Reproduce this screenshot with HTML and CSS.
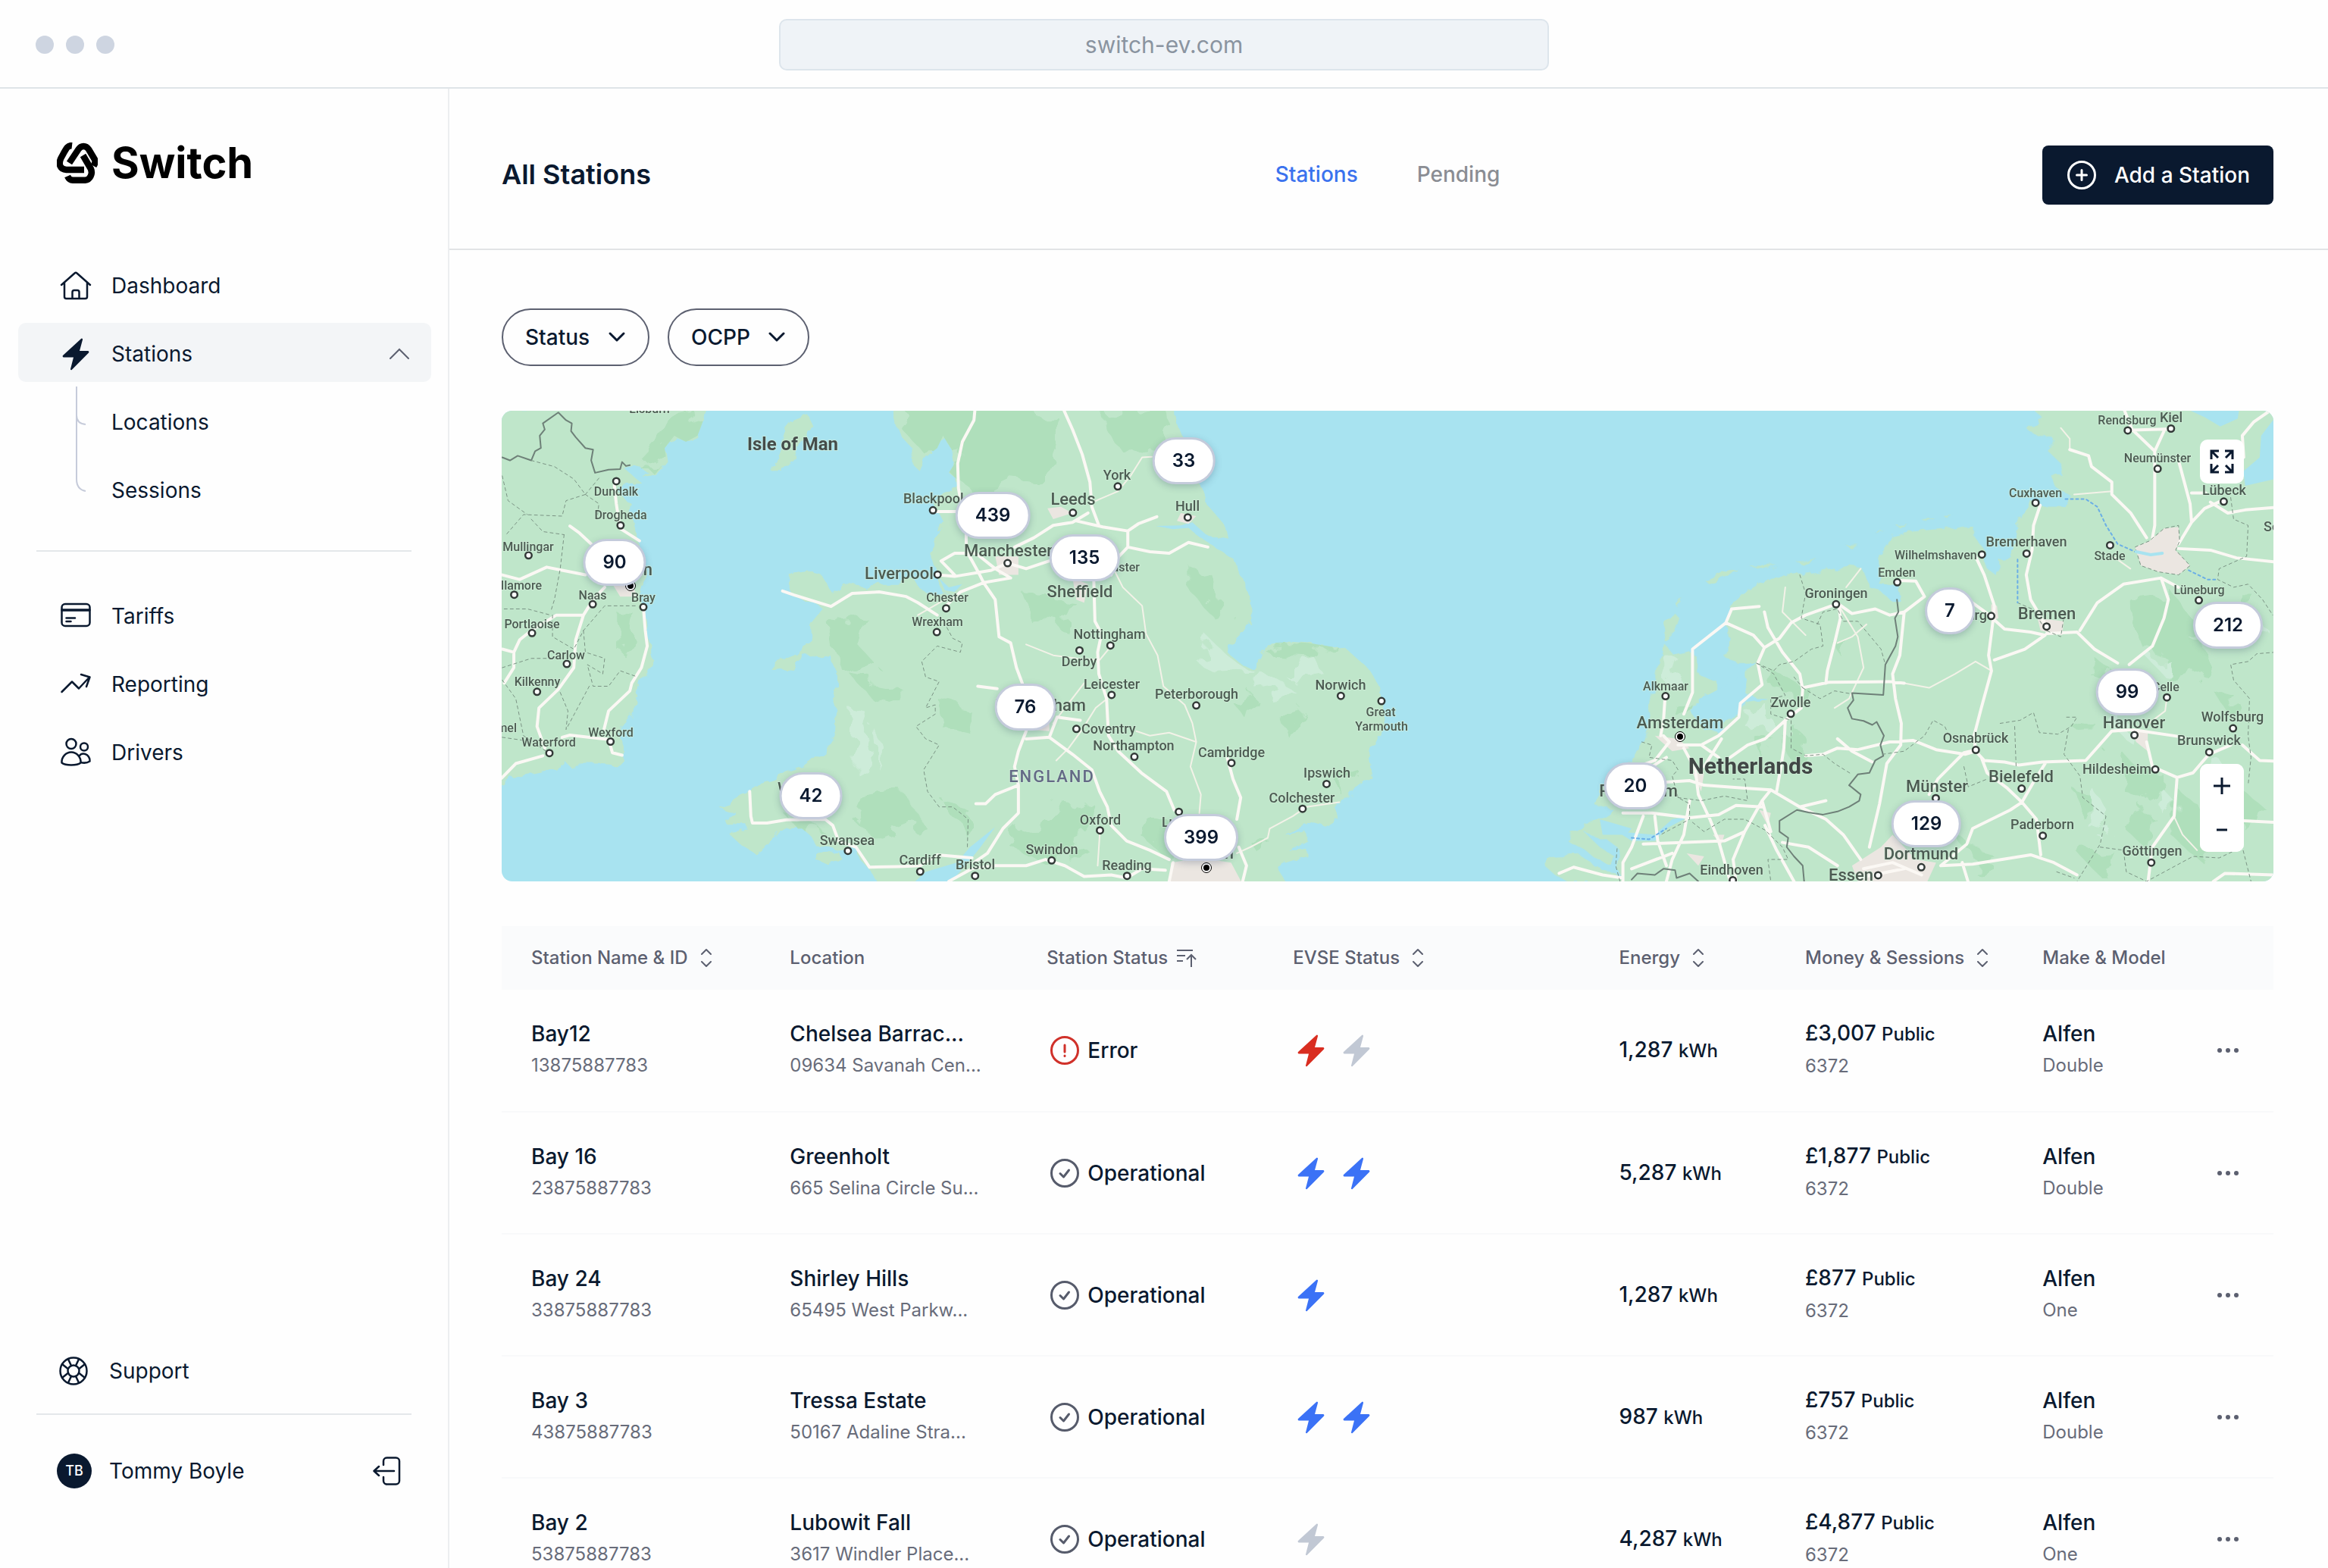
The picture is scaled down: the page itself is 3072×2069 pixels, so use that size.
FILE: index.html
```html
<!DOCTYPE html>
<html lang="en">
<head>
<meta charset="utf-8">
<title>Switch – All Stations</title>
<link rel="stylesheet" href="styles.css">
</head>
<body>
<svg class="defs" aria-hidden="true">
  <defs>
    <symbol id="bolt" viewBox="0 0 44 44"><path d="M29 2 5 24a1.500 1.500 0 0 0 1 2.500h13L15 42a1 1 0 0 0 1.700.9L39 20.500a1.500 1.500 0 0 0-1-2.500H27L31 3.200A1.200 1.200 0 0 0 29 2z"/></symbol>
    <symbol id="sort" viewBox="0 0 20 28"><path d="m4 9 6-6 6 6M4 19l6 6 6-6" fill="none" stroke="currentColor" stroke-width="2" stroke-linecap="round" stroke-linejoin="round"/></symbol>
    <symbol id="ok" viewBox="0 0 40 40"><g fill="none" stroke="currentColor" stroke-width="3" stroke-linecap="round" stroke-linejoin="round"><circle cx="20" cy="20" r="17.500"/><path d="m14 20.500 4.500 4.500 7-9"/></g></symbol>
    <symbol id="error" viewBox="0 0 40 40"><g fill="none" stroke="currentColor" stroke-width="3" stroke-linecap="round"><circle cx="20" cy="20" r="17.500"/><path d="M20 13v9M20 27v.5"/></g></symbol>
    <symbol id="dots" viewBox="0 0 30 8"><circle cx="4" cy="4" r="3"/><circle cx="15" cy="4" r="3"/><circle cx="26" cy="4" r="3"/></symbol>
    <symbol id="down" viewBox="0 0 24 16"><path d="m3 3 9 9 9-9" fill="none" stroke="currentColor" stroke-width="3" stroke-linecap="round" stroke-linejoin="round"/></symbol>
  </defs>
</svg>

<header class="browser">
  <div class="lights"><i></i><i></i><i></i></div>
  <input class="address" type="text" value="switch-ev.com" aria-label="Address" readonly>
</header>

<div class="app">
  <aside class="sidebar">
    <a class="logo" href="#">
      <svg viewBox="0 0 54 54" width="54" height="54" aria-hidden="true">
        <g fill="none" stroke="#000" stroke-width="8.500" stroke-linejoin="round">
          <path d="M20 4.200C14 3.500 12.500 8 5.500 20.500 1.500 29 4.500 35.500 12.500 36H36"/>
          <path d="M16.500 27 28.500 9c3.500-5.500 10-5.500 13.500 0L50 22.500c1.500 3 .5 5-1.500 8.500"/>
          <path d="M34.500 17 45 35c2.500 6-1 14.500-7.500 14.700H21c-4 0-5.500-2-7-5.200"/>
        </g>
      </svg>
      <span>Switch</span>
    </a>
    <nav class="nav" aria-label="Main">
      <a class="nav-row" href="#"><svg viewBox="0 0 44 44" class="line"><path d="m3 21 17.500-15.500a2.200 2.200 0 0 1 3 0L41 21M7 18v18.500a2.500 2.500 0 0 0 2.500 2.500h25a2.500 2.500 0 0 0 2.500-2.500V18M17.500 39v-8.500a2.500 2.500 0 0 1 2.500-2.500h4a2.500 2.500 0 0 1 2.500 2.500V39"/></svg>Dashboard</a>
      <a class="nav-row active" href="#"><svg viewBox="0 0 44 44" fill="#0a192f"><use href="#bolt"/></svg>Stations<svg class="chev" viewBox="0 0 28 18"><path d="m2 15 12-12 12 12"/></svg></a>
      <div class="sub">
        <svg class="tree" viewBox="0 0 16 140"><path d="M2 0v122q0 14 12 16M2 38q0 11 12 12"/></svg>
        <a class="nav-row" href="#">Locations</a>
        <a class="nav-row" href="#">Sessions</a>
      </div>
      <hr>
      <a class="nav-row" href="#"><svg viewBox="0 0 44 44" class="line"><rect x="3.500" y="6" width="37" height="29" rx="4.500"/><path d="M4 14h36" stroke-width="3.500"/><path d="M9.500 24.500h11.500M9.500 29h6"/></svg>Tariffs</a>
      <a class="nav-row" href="#"><svg viewBox="0 0 44 44" class="line"><path d="M3.500 32 17 18.500l9 9L40 12.500M29 9l11.500 3.500L36 25"/></svg>Reporting</a>
      <a class="nav-row" href="#"><svg viewBox="0 0 44 44" class="line"><circle cx="16" cy="10.500" r="6.500"/><circle cx="33" cy="14.500" r="5"/><path d="M3.500 35.500C3 28 9 21.500 16 21.500S29 28 28.500 35.500c-5 4-20 4-25 0zM26.500 26.500c2-2.500 5-3.500 8-2.500 3.500 1 6.500 5 6 9.500-3 2-8 2.500-12 1.500"/></svg>Drivers</a>
    </nav>
    <div class="foot">
      <a class="foot-row" href="#"><svg viewBox="0 0 44 44" class="line"><circle cx="22" cy="22" r="17.500"/><circle cx="22" cy="22" r="7.500"/><path d="m14.500 19-7.500-6M19 15l-4-8.500M25 15l4-8.500M29.500 19l7.500-6M14.500 25 7 31M19 29l-4 8.500M25 29l4 8.500M29.500 25l7.500 6"/></svg>Support</a>
      <hr>
      <div class="foot-row"><span class="avatar">TB</span>Tommy Boyle
        <button class="logout" type="button" aria-label="Log out"><svg viewBox="0 0 44 44" class="line"><path d="M17 14V9a4.500 4.500 0 0 1 4.500-4.500h12A4.500 4.500 0 0 1 38 9v26a4.500 4.500 0 0 1-4.500 4.500h-12A4.500 4.500 0 0 1 17 35v-5M31 22H5M11 16l-6.500 6 6.500 6"/></svg></button>
      </div>
    </div>
  </aside>

  <main class="main">
    <header class="head">
      <h1>All Stations</h1>
      <nav class="tabs" aria-label="Views"><a class="on" href="#">Stations</a><a href="#">Pending</a></nav>
      <button class="add" type="button"><svg viewBox="0 0 40 40" width="40" height="40"><g fill="none" stroke="#fff" stroke-width="3" stroke-linecap="round"><circle cx="20" cy="20" r="17.500"/><path d="M20 13.500v13M13.500 20h13"/></g></svg>Add a Station</button>
    </header>

    <div class="content">
      <div class="filters">
        <label class="pill"><select aria-label="Status"><option>Status</option></select><svg viewBox="0 0 24 16"><use href="#down"/></svg></label>
        <label class="pill"><select aria-label="OCPP"><option>OCPP</option></select><svg viewBox="0 0 24 16"><use href="#down"/></svg></label>
      </div>

      <section class="map" aria-label="Station map">
        <svg class="chart" viewBox="662 542 2338 621" preserveAspectRatio="xMidYMid slice">
          <defs>
            <filter id="coast" x="0" y="0" width="1" height="1"><feTurbulence type="fractalNoise" baseFrequency=".06" numOctaves="3" seed="4"/><feDisplacementMap in="SourceGraphic" scale="12"/></filter>
            <filter id="woods" x="0" y="0" width="1" height="1"><feTurbulence type="fractalNoise" baseFrequency=".025" numOctaves="3" seed="9"/><feDisplacementMap in="SourceGraphic" scale="60"/></filter>
            <path id="land-w" d="M0 20H550L545 60 530 110 500 130 470 110 445 150 450 190 420 235 385 240 400 225 365 205 340 215 385 262 340 265 325 290 345 320 360 330 358 370 370 420 375 470 395 520 400 570 385 600 375 630 395 680 400 740 410 790 410 850 385 900 370 960 365 1010 340 1050 325 1075 335 1110 335 1165 320 1175 270 1170 220 1170 205 1185 185 1160 165 1190 120 1195 80 1205 50 1215 25 1240 0 1260zM815 42 830 80 800 120 780 180 745 220 718 222 740 160 755 100 780 60zM1030 20 1040 60 1055 110 1085 150 1085 200 1105 225 1120 180 1150 150 1165 110 1190 160 1195 200 1180 230 1200 250 1170 300 1140 330 1160 380 1150 420 1165 410 1130 480 1130 500 1145 530 1150 570 1165 620 1200 620 1130 625 1110 610 1080 560 1060 590 1010 590 960 600 910 590 880 620 850 560 820 550 770 560 770 600 780 630 830 650 850 665 820 710 825 770 780 820 740 840 720 870 745 865 780 870 800 815 850 830 870 815 890 870 890 920 880 960 890 1000 885 1080 860 1130 810 1180 760 1200 730 1225 690 1240 665 1258 640 1270 610 1300 585 1310 630 1330 600 1350 605 1365 655 1365 665 1385 610 1395 640 1430 680 1460 710 1430 740 1385 800 1380 820 1400 840 1440 900 1445 940 1440 950 1480 980 1520 1000 1570H2063L2038 1525 2028 1500 2078 1480 2108 1470 2108 1450 2058 1450 2108 1420 2103 1390 2048 1400 2118 1360 2158 1375 2188 1350 2178 1310 2208 1290 2238 1240 2268 1210 2273 1130 2293 1080 2308 1000 2293 920 2263 860 2208 800 2108 780 2048 775 2003 785 1988 830 1968 868 1938 850 1908 820 1903 795 1948 740 1963 700 1958 630 1938 570 1918 510 1868 470 1818 430 1838 430 1908 448 1888 390 1853 340 1838 290 1823 230 1798 150 1778 90 1758 20zM835 1460 890 1450 905 1480 870 1500 835 1480z"/>
            <path id="land-e" d="M100 1500 120 1470 220 1465 260 1490 280 1510 340 1520 365 1551 180 1551 130 1525zM180 1420 190 1390 230 1385 290 1440 340 1470 330 1500 280 1480 240 1450zM360 1570 350 1440 320 1420 260 1400 225 1385 235 1360 290 1350 340 1320 270 1300 290 1270 330 1230 400 1160 440 1090 465 1000 480 920 490 850 510 780 530 800 545 820 600 810 630 830 630 880 690 900 690 940 640 950 610 980 610 1010 650 1060 700 1070 750 1010 800 970 870 960 800 950 795 900 800 860 830 840 760 840 725 830 735 780 730 700 740 660 800 610 880 570 960 560 1050 550 1150 530 1190 535 1205 560 1220 600 1270 620 1290 640 1320 640 1330 600 1255 590 1255 500 1285 460 1300 430 1340 420 1450 410 1581 405 1586 440 1616 480 1626 540 1656 560 1671 540 1666 510 1711 505 1726 450 1731 400 1751 350 1776 320 1816 340 1896 340 1921 310 1866 280 1846 240 1886 240 1881 200 1841 165 1856 120 1776 100 1766 90 1796 60 1816 50 1776 20H2630V1570zM545 680 565 700 550 740 515 770 505 765 520 710zM655 580 700 555 770 542 740 565 665 588zM805 532 900 528 850 542zM965 515 1040 508 990 525zM550 650 580 640 555 662zM1135 460 1180 460 1150 470zM1235 418 1275 416 1250 422zM1310 400 1355 398 1325 405zM1400 382 1450 380 1420 388zM1475 370 1510 368 1485 375z"/>
            <path id="towns-w" d="M320 257h0M331 400h0M390 664h0M147 1136h0M115 938h0M1139 351h0M1332 522h0M1151 559h0M1173 668h0M1149 745h0M919 1452h0M1106 1519h0M1248 1533h0M1501 359h0M1617 274h0M1798 374h0M1598 788h0M1518 804h0M1601 948h0M1820 982h0M1510 1058h0M1660 1148h0M1911 1168h0M2194 951h0M2299 968h0M2157 1236h0M2095 1316h0M1571 1386h0M1775 1326h0M1446 1483h0M1641 1533h0M93 497h0M259 655h0M56 624h0M102 748h0M192 848h0M305 1099h0"/>
            <path id="towns-e" d="M517 952h0M949 1009h0M1105 655h0M1316 584h0M1608 494h0M1793 327h0M1762 491h0M2050 464h0M2111 93h0M2260 87h0M2214 217h0M2442 323h0M1640 693h0M1831 727h0M2356 642h0M2246 956h0M2134 1078h0M2474 1056h0M2392 1133h0M1587 1126h0M2206 1189h0M1745 1251h0M1818 1403h0M2192 1490h0M1399 1505h0M1250 1531h0M749 1547h0M1449 1282h0"/>
          </defs>
          <rect class="sea" x="662" y="542" width="2338" height="621"/>
          <g filter="url(#coast)">
            <use href="#land-w" class="land" transform="translate(650 530) scale(.5102 .40816)"/>
            <use href="#land-e" class="land" transform="translate(2000 530) scale(.38265 .40816)"/>
          </g>
          <clipPath id="clip-w"><use href="#land-w" transform="translate(650 530) scale(.5102 .40816)"/></clipPath>
          <clipPath id="clip-e"><use href="#land-e" transform="translate(2000 530) scale(.38265 .40816)"/></clipPath>
          <g clip-path="url(#clip-w)"><g class="woods" filter="url(#woods)">
            <g transform="translate(650 530) scale(.5102 .40816)">
              <path d="M1100 20H1440L1460 120 1420 260 1340 250 1260 300 1200 260 1210 160 1110 160 1060 90zM1560 20H1740L1780 110 1700 170 1620 150 1580 80zM450 60 540 40 520 120 440 230 390 230 450 150zM320 680 370 690 360 780 320 800zM880 680 960 690 940 780 1000 860 930 900 900 850zM940 900 1060 930 1080 1000 980 960zM1150 960 1220 980 1240 1080 1170 1060zM1370 620 1500 640 1480 740 1400 720zM1800 530 1860 560 1900 660 1850 680 1800 600zM950 1280 1060 1260 1100 1350 1000 1400 930 1350zM1470 1300 1540 1280 1560 1420 1440 1500 1340 1440zM2010 780 2200 800 2160 820 2000 810zM1920 980 1980 960 1960 1040zM2040 1020 2100 1000 2060 1090zM1700 1340 1760 1360 1740 1460 1690 1420zM1180 1310 1240 1330 1220 1400zM760 1340 850 1380 800 1400zM2190 1200 2240 1180 2200 1280zM1940 1400 2010 1420 1990 1470z"/>
              <path class="pale" d="M930 1000 970 1010 980 1080 940 1200 920 1140zM1850 760 1930 850 1980 880 1880 890 1830 850zM2060 840 2120 820 2150 880 2060 900zM990 1060 1020 1130 1000 1190zM1990 880 2080 940 2000 960z"/>
            </g>
          </g></g>
          <g clip-path="url(#clip-e)"><g class="woods" filter="url(#woods)">
            <g transform="translate(2000 530) scale(.38265 .40816)">
              <path d="M2100 620 2250 600 2330 700 2280 820 2170 800zM2210 740 2370 760 2400 860 2250 900zM1990 820 2060 870 2000 900zM2080 1120 2160 1200 2250 1220 2200 1320 2120 1280zM1920 1060 1990 1030 1990 1090zM2280 1250 2350 1300 2440 1420 2380 1500 2280 1420zM2100 1380 2200 1340 2180 1450zM1900 1230 1990 1280 1960 1350zM2500 1250 2590 1320 2570 1380 2480 1350zM900 1060 980 1060 960 1180zM840 1100 880 1080 870 1180zM880 870 990 900 980 950 900 940zM1930 1450 2050 1440 2010 1530zM2400 930 2480 950 2450 1000zM1290 1340 1350 1330 1330 1400zM1100 780 1150 780 1130 830zM550 980 600 960 580 1040zM2480 600 2560 640 2500 660zM1560 1440 1640 1460 1600 1540z"/>
              <path class="pale" d="M770 980 860 970 860 1040 790 1050zM500 810 560 830 540 890 500 900zM2180 830 2250 830 2240 890zM2050 1050 2110 1030 2100 1080zM1990 1250 2060 1340 1980 1380zM2230 1250 2280 1300 2240 1340zM2520 700 2600 740 2560 800zM2400 1150 2480 1180 2430 1250z"/>
            </g>
          </g></g>
          <g transform="translate(650 530) scale(.5102 .40816)">
            <path class="sea" d="M1085 1560 1120 1520 1200 1490 1235 1440 1300 1375 1262 1440 1230 1490 1180 1560zM1715 402 1780 400 1810 390 1850 435 1830 440 1800 408 1760 412zM1155 570 1180 600 1215 590 1195 615 1170 610z"/>
            <path class="urban" d="M1755 1490 1830 1475 1910 1490 1940 1560H1750zM1300 500 1360 500 1360 560 1310 560zM1435 345 1470 340 1500 360 1450 380zM310 590 360 590 375 630 330 630zM1380 1030 1440 1040 1440 1065 1390 1060zM1780 360 1820 370 1800 395 1770 385zM1500 570 1540 590 1530 650 1510 640z"/>
            <path class="road thin" d="M1545 330 1570 315 1617 290 1650 240 1680 180 1705 178M1610 550 1630 600 1680 660 1690 750 1720 820 1735 920 1790 980 1810 1040 1820 1100 1805 1180 1832 1270 1828 1330M1458 1160 1490 1120 1525 1060 1560 990 1590 960M1380 785 1450 820 1510 830 1570 835 1600 790M1665 1065 1700 1080 1750 1070 1820 1100M1925 1460 1960 1440 2005 1410 2010 1380 2070 1340 2105 1310 2190 1295M1571 1386 1565 1500M1100 690 1170 640M1530 910 1450 1040"/>
            <path class="road" d="M315 270 320 330 330 410 380 450M200 402 225 425 255 460M25 560 70 575 140 535 180 545 240 560M290 600 260 640 235 690 165 690 100 740 70 770 55 810 25 800M55 810V860L30 910M235 690 215 770 210 860 170 930 120 990 115 1050 135 1120M390 664 395 740 400 790 385 860 360 910 355 935 300 1000 288 1060M180 1085 200 1078 300 1092 310 1135 335 1143M0 1240 25 1215 60 1170 130 1145M750 612 780 625 875 662 930 620 1000 615 1070 630 1100 650 1150 690M1248 20 1245 60 1215 130 1203 200 1205 280 1225 420V480L1260 560 1270 585 1300 640 1310 760 1340 780 1355 860 1370 910M1475 20 1500 90 1525 170 1545 260 1550 340 1568 400M1139 355H1200M1150 560 1195 565 1290 545 1332 522M1195 490 1160 515 1195 560M1195 490H1250L1300 540 1340 570 1270 585 1210 615 1173 660M1332 522 1380 540 1440 515M1350 470 1400 440 1450 400 1500 390 1540 360M1508 385 1578 405 1643 418V470L1700 485 1750 490 1800 455 1850 470M1643 418 1670 395 1718 372M1643 470 1620 500 1600 560M1555 580 1558 710 1575 750 1565 810 1568 880 1588 960 1593 1080 1618 1130 1678 1200 1743 1260 1763 1320M1900 1150 1915 1220 1935 1280 1925 1350M1380 1065 1360 1130 1350 1180 1360 1240V1330L1320 1380 1280 1460 1245 1490M1360 1240 1300 1270 1275 1300H1250M1380 1090 1440 1085 1500 1140 1550 1190 1570 1260 1590 1310 1600 1370 1640 1420 1700 1450 1750 1480M1440 1085 1460 1020 1520 1030M1255 920 1305 928M665 1260 668 1340 672 1362H710L760 1352 860 1350 880 1370 895 1420 940 1440 975 1505 1050 1503 1106 1500 1150 1465 1240 1475M1180 1551 1240 1510 1300 1500 1380 1500 1430 1480 1480 1500 1530 1535 1600 1530 1640 1540 1680 1510 1740 1515M1760 1490 1750 1551M1930 1440 1950 1500 1940 1551"/>
            <path class="border" d="M25 180 45 190 65 175 100 190 110 160 125 150 122 110 135 90 130 70 170 35 190 60 205 70 203 95 215 115 240 150 260 155 255 190 265 230 300 220 330 218 335 195 345 208 355 205"/>
            <path class="dash" d="M100 190 160 210 210 250 240 300 190 320 180 370 80 365 35 430M240 300 275 330 270 380M240 300 280 240M185 430 175 540 160 640 150 680M100 380 130 420 185 430M25 240 40 320 90 365M30 670 90 670 150 690M155 690V760L210 800 235 740 290 660 370 660M235 740 240 810 290 830 285 880 245 850 260 920 300 920 330 870 375 890M25 860 100 830 180 830M175 940 195 1000 190 1060 250 920M25 900 60 960 80 1080 150 1140M25 1085 80 1095M1175 730 1190 765 1215 780 1210 810 1180 800 1150 790 1110 840 1120 890 1155 905 1120 990 1145 980 1145 1010 1095 1050 1120 1090 1155 1110 1115 1190 1125 1260 1155 1310 1190 1310 1230 1350 1228 1440"/>
          </g>
          <g transform="translate(2000 530) scale(.38265 .40816)">
            <path class="sea" d="M2306 20 2496 20 2490 55 2430 80 2376 50zM2620 50 2571 110 2566 180 2510 225 2516 272 2620 250zM350 1390 480 1400 540 1350 600 1340 520 1380 480 1420 400 1420zM290 1350 400 1380 380 1400 300 1400zM740 850 780 860 760 900 700 930 640 960 620 1030 680 1060 740 1000 790 960 790 870z"/>
            <path class="urban" d="M2136 470 2186 450 2236 410 2286 405 2290 450 2276 480 2326 530 2286 560 2216 550 2156 530zM1160 1500 1260 1440 1300 1400 1380 1480 1450 1490 1420 1551H1180zM1800 700 1890 710 1885 755 1810 740zM480 1080 560 1090 600 1120 540 1130zM2120 1060 2180 1070 2180 1130 2140 1100zM610 1200 650 1200 640 1260zM1640 655 1660 660 1665 700 1640 710zM840 1320 880 1330 870 1370zM590 1460 650 1470 630 1500zM680 1400 720 1400 710 1430z"/>
            <path class="road thin" d="M1641 870 1586 840 1516 880 1426 925 1340 910M1190 540 1140 600M930 600 920 680 1000 755M1115 660 1180 760 1200 860 1150 960 1100 990M2120 540 2060 500M2246 956 2240 1000 2170 1050M1880 85 1911 120 1911 155M1926 300 2056 290M1110 780 1160 760 1210 720M2270 1340 2300 1400 2350 1450"/>
            <path class="road" d="M515 960 510 1030 500 1080M745 670 840 662M725 715 610 800V940L580 1010M745 670 725 715 820 755 858 795 910 765 950 715 1000 690 1090 660 1115 655 1160 685 1240 670 1290 690 1340 680 1410 630 1380 580 1320 578M858 680 870 730 920 810 980 880 990 930 985 990 930 1030M858 795 835 845 850 915 775 975 770 1020 700 1080 640 1110M1115 660 1120 700 1100 780 1075 870 1070 910M990 925 1080 907 1290 905 1340 910M1340 680 1325 820 1300 880 1310 960 1330 1040 1328 1110 1280 1170 1255 1300 1220 1440M560 1110 640 1110 700 1150M930 1030 925 1120 915 1180 900 1260M930 1030 860 1090 800 1110 740 1150M1000 1145 1060 1140 1110 1120 1180 1125 1290 1100 1370 1095 1450 1125 1550 1140M1110 1090 1160 1130 1230 1165M520 1230 600 1225 650 1240 800 1250 880 1255 980 1310 1070 1350 1130 1400 1190 1480M980 1310 1070 1290M650 1180 710 1090M580 1120 620 1190 630 1270 670 1350 700 1420M600 1290 580 1400 540 1480 520 1551M370 1330 470 1330 600 1345 700 1335 760 1305 850 1310M880 1255 850 1290 790 1390 720 1420 440 1430M440 1340 400 1440 370 1490V1551M700 1420 740 1551M400 1510 540 1460M480 1340 490 1420 520 1500M150 1525 200 1505 300 1530 370 1540M860 1370 900 1450 960 1551M920 1425 1010 1440 1110 1500M790 1390 750 1480 760 1551M480 1160 530 1100 510 1080M420 1180 480 1160M850 1290 880 1390M520 1150 470 1180M1586 500 1616 560 1651 660 1646 710 1631 820 1641 870 1606 990 1581 1080 1586 1126M1560 640 1620 680 1686 735 1776 745 1826 755 1756 800 1651 835M1809 335 1786 400 1781 480 1761 560 1776 640 1831 727M1831 750 1936 745 1996 800 2076 845M1946 740 2006 650 2096 590 2226 570 2251 640 2236 700 2196 790 2116 850M1911 155 1976 175 1986 210 2056 260V300L2121 360 2176 440M2096 20 2126 90 2204 160 2236 95M2204 160V400L2196 440M2126 92 2261 88M2286 190 2306 260 2326 330 2331 390 2286 460M2331 390 2376 345 2436 320M2396 325 2456 360 2516 350 2620 342M2331 295H2380M2286 475 2396 480 2486 505 2620 518M2226 570 2286 600M2600 30 2546 65 2506 110 2511 180M1586 1126 1546 1135 1456 1220 1426 1270M1550 1140 1586 1130 1616 1160 1686 1165 1736 1175 1816 1165 1966 1160 2056 1065 2126 1060 2306 1085M1606 1150 1626 1200 1696 1250 1746 1295 1796 1350 1811 1465M1746 1295 1706 1320 1576 1380 1556 1430 1466 1500M1746 1295 1786 1230 1826 1170M1466 1500 1576 1495 1776 1465 1856 1490 1936 1530M2176 1100 2196 1180 2281 1215 2336 1200 2391 1140 2466 1110M2281 1215 2271 1340 2196 1440 2181 1551M2506 1110 2566 1160 2620 1162M2510 1355 2620 1360M2406 1551 2446 1525 2620 1530M1540 1490 1560 1551M1200 1510 1300 1490 1400 1530M1180 1540 1340 1510"/>
            <path class="border" d="M1315 640 1320 680 1308 700 1318 760 1310 790 1275 850 1268 948 1160 942 1165 965 1145 990 1160 1025 1200 1032 1230 1045 1245 1035 1270 1080 1258 1110 1268 1145 1240 1160 1220 1200 1180 1205 1150 1240 1190 1270 1185 1290 1150 1310 1110 1325 1060 1335 1010 1328 970 1320 910 1355 910 1390 940 1410 935 1440 960 1470 990 1500 995 1551M400 1545 420 1525 480 1530 510 1510 550 1515 555 1540 600 1525 630 1551"/>
            <path class="dash" d="M980 560 1000 620 985 700 1050 720 1060 790 1020 800 960 840 910 850 890 870 830 845M1040 720 1060 680 1110 670 1130 710 1180 710 1260 800 1275 850M830 845 890 880 930 950 880 960 880 1010 950 1030 950 1120 1000 1145 1060 1140 1100 1170 1160 1205M990 925 1050 960 1100 935 1160 945M960 890 990 925M1265 1140 1340 1130 1410 1080 1440 1030 1480 1050 1500 1090M435 1100 470 1110 460 1150 540 1160 560 1190 540 1210 560 1280 600 1300V1350L500 1400M560 1280 640 1290 720 1275 800 1290 790 1220 750 1220M610 1360 650 1390 720 1350 790 1350 860 1385 920 1440 940 1480 870 1480 880 1551M350 1445 345 1500 360 1551M1671 1040 1740 1030 1786 1005 1806 1070 1870 1075 1916 1050 1936 1020 1900 1020M1721 1050 1726 1180M1546 1180 1561 1245 1626 1220M1906 1060 1891 1140 1946 1210 1956 1280 2036 1340 2016 1430 1936 1551M1866 1520 1926 1540M2016 1440 2096 1450 2106 1520 2176 1551 2336 1470 2426 1475 2506 1440 2536 1551M2620 810 2556 815 2526 840 2466 850 2476 900 2531 960 2526 1080 2536 1150 2526 1240M2466 310 2476 380 2526 400 2521 500 2426 540 2421 575 2476 600 2526 590 2576 640 2611 690M2136 470 2186 450 2236 410 2286 400 2290 450 2276 480 2326 530 2286 560 2216 550 2156 530zM1731 650 1780 670 1830 740 1880 760 1890 700"/>
            <path class="river" d="M1896 315 1966 315 2006 340 2036 400 2076 460 2136 485M2321 545 2386 575 2421 575M1731 510V650M400 1410 460 1415 520 1380"/>
            <path class="water" d="M2140 485 2190 495 2230 490"/>
          </g>
          <g transform="translate(650 530) scale(.5102 .40816)"><use href="#towns-w" class="ring"/><use href="#towns-w" class="hole"/></g>
          <g transform="translate(2000 530) scale(.38265 .40816)"><use href="#towns-e" class="ring"/><use href="#towns-e" class="hole"/></g>
          <g class="capitals"><circle cx="2217" cy="972" r="5"/><circle cx="1592" cy="1145" r="5"/><circle cx="832" cy="773" r="5"/></g>

          <g class="t16">
            <text x="857" y="545">Lisburn</text><text x="813" y="654">Dundalk</text><text x="819" y="685">Drogheda</text><text x="697" y="727">Mullingar</text><text class="end" x="715" y="778">Tullamore</text><text x="782" y="791">Naas</text><text x="849" y="794">Bray</text><text x="702" y="829">Portlaoise</text><text x="747" y="870">Carlow</text><text x="709" y="905">Kilkenny</text><text class="end" x="682" y="966">Clonmel</text><text x="724" y="985">Waterford</text><text x="806" y="972">Wexford</text><text x="1250" y="794">Chester</text><text x="1237" y="826">Wrexham</text><text class="end" x="1504" y="754">Doncaster</text><text x="1822" y="945">Great</text><text x="1823" y="964">Yarmouth</text>
            <text class="start" x="2500" y="738">Wilhelmshaven</text><text x="2503" y="761">Emden</text><text x="2198" y="911">Alkmaar</text><text x="2807" y="560">Rendsburg</text><text x="2847" y="610">Neumünster</text><text x="2686" y="656">Cuxhaven</text><text x="2784" y="739">Stade</text><text x="2902" y="784">Lüneburg</text><text class="start" x="2840" y="912">Celle</text>
          </g>
          <g class="t18">
            <text class="start" x="1192" y="664">Blackpool</text><text x="1474" y="633">York</text><text x="1567" y="674">Hull</text><text x="1464" y="843">Nottingham</text><text x="1424" y="879">Derby</text><text x="1467" y="909">Leicester</text><text x="1579" y="922">Peterborough</text><text class="start" x="1427" y="968">Coventry</text><text x="1496" y="990">Northampton</text><text x="1625" y="999">Cambridge</text><text x="1769" y="910">Norwich</text><text x="1751" y="1026">Ipswich</text><text x="1718" y="1059">Colchester</text><text x="1452" y="1088">Oxford</text><text class="start" x="1533" y="1091">Luton</text><text x="1118" y="1115">Swansea</text><text x="1214" y="1141">Cardiff</text><text x="1287" y="1147">Bristol</text><text x="1388" y="1127">Swindon</text><text x="1487" y="1148">Reading</text>
            <text x="2423" y="789">Groningen</text><text x="2363" y="933">Zwolle</text><text x="2285" y="1154">Eindhoven</text><text x="2865" y="557">Kiel</text><text x="2935" y="653">Lübeck</text><text x="2674" y="721">Bremerhaven</text><text class="end" x="2622" y="818">enburg</text><text class="start" x="2987" y="701">Schwerin</text><text x="2946" y="952">Wolfsburg</text><text x="2915" y="983">Brunswick</text><text x="2607" y="980">Osnabrück</text><text class="start" x="2748" y="1021">Hildesheim</text><text x="2695" y="1094">Paderborn</text><text x="2840" y="1129">Göttingen</text>
          </g>
          <g class="t22">
            <text class="end" x="861" y="759">Dublin</text><text x="1416" y="666">Leeds</text><text class="start" x="1272" y="734">Manchester</text><text class="start" x="1141" y="764">Liverpool</text><text x="1425" y="788">Sheffield</text><text class="end" x="1433" y="938">Birmingham</text><text class="end" x="1628" y="1133">London</text><text class="start" x="1026" y="1048">Wales</text>
            <text x="2217" y="961">Amsterdam</text><text class="end" x="2214" y="1051">Rotterdam</text><text x="2556" y="1045">Münster</text><text x="2535" y="1134">Dortmund</text><text class="start" x="2413" y="1162">Essen</text><text x="2701" y="817">Bremen</text><text x="2816" y="961">Hanover</text><text x="2667" y="1032">Bielefeld</text>
          </g>
          <text class="region" x="1388" y="1032">ENGLAND</text>
          <text class="island" x="1046" y="594">Isle of Man</text>
          <text class="country" x="2310" y="1021">Netherlands</text>
        </svg>

        <button class="pin" type="button" style="--x:900;--y:66">33</button>
        <button class="pin" type="button" style="--x:648;--y:138">439</button>
        <button class="pin" type="button" style="--x:769;--y:194">135</button>
        <button class="pin" type="button" style="--x:149;--y:200">90</button>
        <button class="pin" type="button" style="--x:691;--y:391">76</button>
        <button class="pin" type="button" style="--x:408;--y:508">42</button>
        <button class="pin" type="button" style="--x:923;--y:563">399</button>
        <button class="pin" type="button" style="--x:1496;--y:495">20</button>
        <button class="pin" type="button" style="--x:1880;--y:545">129</button>
        <button class="pin" type="button" style="--x:1911;--y:264">7</button>
        <button class="pin" type="button" style="--x:2278;--y:283">212</button>
        <button class="pin" type="button" style="--x:2145;--y:371">99</button>

        <div class="controls">
          <button class="ctl" type="button" aria-label="Full screen"><svg viewBox="0 0 32 32"><path d="M2 13V2h10M2 2l9 9M20 2h10v11M30 2l-9 9M2 19v11h10M2 30l9-9M20 30h10V19M30 30l-9-9"/></svg></button>
          <div class="zoom">
            <button class="ctl" type="button" aria-label="Zoom in"><svg viewBox="0 0 32 32"><path d="M16 5v22M5 16h22"/></svg></button>
            <button class="ctl" type="button" aria-label="Zoom out"><svg viewBox="0 0 32 32"><path d="M9 16h14"/></svg></button>
          </div>
        </div>
      </section>

      <table class="stations">
        <colgroup><col class="c-name"><col class="c-place"><col class="c-state"><col class="c-evse"><col class="c-energy"><col class="c-money"><col class="c-make"><col class="c-more"></colgroup>
        <thead>
          <tr>
            <th scope="col"><button type="button">Station Name &amp; ID<svg class="sort"><use href="#sort"/></svg></button></th>
            <th scope="col">Location</th>
            <th scope="col"><button class="tight" type="button">Station Status<svg class="sorted" viewBox="0 0 28 28"><path d="M2 4h21M2 11h11M2 18h8M21 26V11M15 16l6-6 6 6"/></svg></button></th>
            <th scope="col"><button type="button">EVSE Status<svg class="sort"><use href="#sort"/></svg></button></th>
            <th scope="col"><button type="button">Energy<svg class="sort"><use href="#sort"/></svg></button></th>
            <th scope="col"><button type="button">Money &amp; Sessions<svg class="sort"><use href="#sort"/></svg></button></th>
            <th scope="col">Make &amp; Model</th>
            <th></th>
          </tr>
        </thead>
        <tbody>
          <tr>
            <td><strong>Bay12</strong><small>13875887783</small></td>
            <td><strong>Chelsea Barrac...</strong><small>09634 Savanah Cen...</small></td>
            <td><span class="state"><svg class="bad"><use href="#error"/></svg>Error</span></td>
            <td><span class="bolts"><svg class="red"><use href="#bolt"/></svg><svg class="grey"><use href="#bolt"/></svg></span></td>
            <td>1,287 <span class="unit">kWh</span></td>
            <td><strong>£3,007 <span class="unit">Public</span></strong><small>6372</small></td>
            <td><strong>Alfen</strong><small>Double</small></td>
            <td><button class="more" type="button" aria-label="More"><svg><use href="#dots"/></svg></button></td>
          </tr>
          <tr>
            <td><strong>Bay 16</strong><small>23875887783</small></td>
            <td><strong>Greenholt</strong><small>665 Selina Circle Su...</small></td>
            <td><span class="state"><svg><use href="#ok"/></svg>Operational</span></td>
            <td><span class="bolts"><svg><use href="#bolt"/></svg><svg><use href="#bolt"/></svg></span></td>
            <td>5,287 <span class="unit">kWh</span></td>
            <td><strong>£1,877 <span class="unit">Public</span></strong><small>6372</small></td>
            <td><strong>Alfen</strong><small>Double</small></td>
            <td><button class="more" type="button" aria-label="More"><svg><use href="#dots"/></svg></button></td>
          </tr>
          <tr>
            <td><strong>Bay 24</strong><small>33875887783</small></td>
            <td><strong>Shirley Hills</strong><small>65495 West Parkw...</small></td>
            <td><span class="state"><svg><use href="#ok"/></svg>Operational</span></td>
            <td><span class="bolts"><svg><use href="#bolt"/></svg></span></td>
            <td>1,287 <span class="unit">kWh</span></td>
            <td><strong>£877 <span class="unit">Public</span></strong><small>6372</small></td>
            <td><strong>Alfen</strong><small>One</small></td>
            <td><button class="more" type="button" aria-label="More"><svg><use href="#dots"/></svg></button></td>
          </tr>
          <tr>
            <td><strong>Bay 3</strong><small>43875887783</small></td>
            <td><strong>Tressa Estate</strong><small>50167 Adaline Stra...</small></td>
            <td><span class="state"><svg><use href="#ok"/></svg>Operational</span></td>
            <td><span class="bolts"><svg><use href="#bolt"/></svg><svg><use href="#bolt"/></svg></span></td>
            <td>987 <span class="unit">kWh</span></td>
            <td><strong>£757 <span class="unit">Public</span></strong><small>6372</small></td>
            <td><strong>Alfen</strong><small>Double</small></td>
            <td><button class="more" type="button" aria-label="More"><svg><use href="#dots"/></svg></button></td>
          </tr>
          <tr>
            <td><strong>Bay 2</strong><small>53875887783</small></td>
            <td><strong>Lubowit Fall</strong><small>3617 Windler Place...</small></td>
            <td><span class="state"><svg><use href="#ok"/></svg>Operational</span></td>
            <td><span class="bolts"><svg class="grey"><use href="#bolt"/></svg></span></td>
            <td>4,287 <span class="unit">kWh</span></td>
            <td><strong>£4,877 <span class="unit">Public</span></strong><small>6372</small></td>
            <td><strong>Alfen</strong><small>One</small></td>
            <td><button class="more" type="button" aria-label="More"><svg><use href="#dots"/></svg></button></td>
          </tr>
        </tbody>
      </table>
    </div>
  </main>
</div>
</body>
</html>
```
FILE: styles.css
```css
* { box-sizing: border-box; }

body {
  margin: 0;
  height: 100vh;
  display: flex;
  flex-direction: column;
  overflow: hidden;
  background: #fefefe;
  color: #0a192f;
  font: 28px/36px Inter, "Liberation Sans", sans-serif;
}

a { color: inherit; text-decoration: none; }
button, select, input { font: inherit; color: inherit; margin: 0; }
button { border: 0; padding: 0; background: none; }
svg { display: block; flex: none; }
hr { border: 0; border-top: 2px solid #e4e7ea; margin: 0; }
.defs { position: absolute; width: 0; height: 0; }
.line { fill: none; stroke: #0a192f; stroke-width: 2.500; stroke-linecap: round; stroke-linejoin: round; }

/* Browser bar */
.browser {
  flex: none;
  display: grid;
  grid-template-columns: 1fr 1016px 1fr;
  align-items: center;
  height: 117px;
  padding-top: 2px;
  border-bottom: 2px solid #dfe4e8;
}
.lights { display: flex; gap: 16px; padding-left: 47px; }
.lights i { width: 24px; height: 24px; border-radius: 50%; background: #ced5e1; }
.address {
  height: 68px;
  border: 2px solid #dde5ec;
  border-radius: 10px;
  background: #eff3f7;
  color: #8a94a0;
  font-size: 30px;
  text-align: center;
}

.app { flex: 1; display: flex; min-height: 0; }

/* Sidebar */
.sidebar {
  flex: none;
  width: 593px;
  border-right: 2px solid #eceef0;
  display: flex;
  flex-direction: column;
  padding: 64px 22px 96px 24px;
}
.logo {
  display: flex;
  align-items: center;
  gap: 18px;
  height: 68px;
  margin-left: 51px;
  color: #000;
  font-size: 56px;
  line-height: 68px;
  font-weight: 700;
}
.nav { margin-top: 87px; display: flex; flex-direction: column; gap: 12px; }
.nav-row {
  display: flex;
  align-items: center;
  gap: 25px;
  height: 78px;
  padding: 3px 28px 0 54px;
  border-radius: 10px;
}
.nav-row > svg { width: 44px; height: 44px; }
.nav-row.active { background: #f3f5f7; }
.nav-row > .chev {
  width: 28px;
  height: 18px;
  margin-left: auto;
  fill: none;
  stroke: #5c6070;
  stroke-width: 2;
  stroke-linecap: round;
}
.sub { position: relative; display: flex; flex-direction: column; gap: 12px; }
.sub .nav-row { padding-left: 123px; }
.tree { position: absolute; left: 75px; top: -6px; width: 16px; height: 140px; fill: none; stroke: #c6cbda; stroke-width: 2; }
.nav hr { margin: 30px 26px 32px 24px; }
.foot { margin-top: auto; }
.foot-row { display: flex; align-items: center; gap: 25px; height: 64px; padding: 0 36px 0 51px; }
.foot-row > svg { width: 44px; height: 44px; }
.foot hr { margin: 24px 26px 42px 24px; }
.avatar {
  width: 46px;
  height: 46px;
  border-radius: 50%;
  background: #0a192f;
  color: #fff;
  font-size: 18px;
  line-height: 46px;
  font-weight: 500;
  text-align: center;
}
.foot-row .avatar { margin-right: -2px; }
.logout { margin-left: auto; }
.logout svg { width: 44px; height: 44px; }

/* Page header */
.main { flex: 1; min-width: 0; display: flex; flex-direction: column; }
.head {
  flex: none;
  display: grid;
  grid-template-columns: 1fr auto 1fr;
  align-items: center;
  height: 213px;
  padding: 16px 72px 0 69px;
  border-bottom: 2px solid #e2e4e6;
}
h1 { margin: 0; padding-bottom: 2px; font-size: 36px; line-height: 44px; font-weight: 600; }
.tabs { display: flex; gap: 78px; padding-bottom: 2px; font-weight: 500; color: #8a8d93; }
.tabs .on { color: #3b72ee; }
.add {
  justify-self: end;
  display: flex;
  align-items: center;
  gap: 23px;
  height: 78px;
  padding: 0 31px 0 32px;
  border-radius: 8px;
  background: #0a192f;
  color: #fff;
  font-weight: 500;
}

.content { padding: 77px 72px 0 69px; }
.filters { display: flex; gap: 24px; }
.pill { display: grid; align-items: center; }
.pill > * { grid-area: 1 / 1; }
.pill select {
  appearance: none;
  height: 76px;
  padding: 0 76px 0 29px;
  border: 2px solid #5c6070;
  border-radius: 38px;
  background: none;
  font-weight: 500;
}
.pill svg { justify-self: end; width: 24px; height: 16px; margin-right: 31px; pointer-events: none; }

/* Map */
.map {
  position: relative;
  margin-top: 59px;
  aspect-ratio: 2338 / 621;
  border-radius: 14px;
  overflow: hidden;
}
.chart { width: 100%; height: 100%; }
.chart text { text-anchor: middle; paint-order: stroke; stroke: #d3eeda; stroke-width: 2px; stroke-opacity: .6; fill: #4c5b52; font-family: Roboto, "Liberation Sans", sans-serif; font-weight: 500; }
.chart .start { text-anchor: start; }
.chart .end { text-anchor: end; }
.t16 { font-size: 16px; }
.t18 { font-size: 18px; }
.t22 { font-size: 22px; }
.chart .region { font-size: 22px; letter-spacing: 2px; fill: #646a86; }
.chart .island { font-size: 24px; fill: #454c4a; font-weight: 700; }
.chart .country { font-size: 30px; fill: #414746; font-weight: 700; }
.sea { fill: #a8e3f0; }
.land { fill: #bfe6ca; }
.woods { fill: #afdfbb; }
.pale { fill: #cdecd9; }
.urban { fill: #ebe6e1; }
.chart path, .chart use { vector-effect: non-scaling-stroke; stroke-linejoin: round; stroke-linecap: round; }
.road { fill: none; stroke: #fbf8f4; stroke-width: 4px; }
.road.thin { stroke: #f3f2e8; stroke-width: 2px; }
.border { fill: none; stroke: #6e8078; stroke-width: 2px; }
.dash { fill: none; stroke: #7b9384; stroke-width: 1px; stroke-dasharray: 4 4; }
.river { fill: none; stroke: #6aaee6; stroke-width: 2px; stroke-dasharray: 3 4; }
.water { fill: none; stroke: #a8e3f0; stroke-width: 4px; }
.ring { stroke: #333a38; stroke-width: 11px; }
.hole { stroke: #fff; stroke-width: 6px; }
.capitals circle { fill: #000; stroke: #fff; stroke-width: 2px; outline: 1px solid #000; outline-offset: 0; border-radius: 50%; }

.pin {
  position: absolute;
  left: calc(var(--x) / 2338 * 100%);
  top: calc(var(--y) / 621 * 100%);
  translate: -50% -50%;
  height: 62px;
  padding: 0 23px;
  border: 3px solid #c4cbdb;
  border-radius: 31px;
  background: #fff;
  box-shadow: 0 3px 10px rgba(40, 60, 90, .25);
  font-size: 24px;
  font-weight: 600;
}
.controls {
  position: absolute;
  inset: 38px 39px 39px auto;
  display: flex;
  flex-direction: column;
  justify-content: space-between;
}
.ctl { display: grid; place-items: center; width: 58px; height: 58px; border-radius: 10px; background: #fff; }
.ctl svg { width: 32px; height: 32px; fill: none; stroke: #0a192f; stroke-width: 3; }
.zoom { border-radius: 10px; background: #fff; }

/* Stations table */
.stations { width: 100%; margin-top: 59px; table-layout: fixed; border-collapse: collapse; text-align: left; }
.c-name { width: 14.6%; }
.c-place { width: 14.5%; }
.c-state { width: 13.9%; }
.c-evse { width: 18.4%; }
.c-energy { width: 10.5%; }
.c-money { width: 13.4%; }
.c-make { width: 9.4%; }
th, td { padding: 0 0 0 39px; font-weight: 500; white-space: nowrap; }
th { height: 84px; background: #fafbfc; color: #5c6070; font-size: 24px; line-height: 32px; }
th button { display: flex; align-items: center; gap: 14px; }
th .tight { gap: 10px; }
.sort { width: 20px; height: 28px; }
.sorted { width: 28px; height: 28px; fill: none; stroke: currentColor; stroke-width: 2; }
td { height: 161px; border-bottom: 2px solid #f8f9fa; }
strong, small { display: block; }
strong { font-weight: 500; line-height: 40px; }
small { color: #686c7a; font-size: 24px; line-height: 44px; font-weight: 400; }
.unit { font-size: 24px; }
.state { display: flex; align-items: center; gap: 10px; margin-left: 4px; }
.state svg { width: 40px; height: 40px; color: #565b6b; }
.state .bad { color: #d0312a; }
.bolts { display: flex; gap: 16px; margin-left: 2px; fill: #3b72f6; }
.bolts svg { width: 44px; height: 44px; }
.bolts .red { fill: #d92d20; }
.bolts .grey { fill: #c1c8d4; }
.more { display: grid; place-items: center; width: 30px; height: 30px; margin-left: 10px; }
.more svg { width: 30px; height: 8px; fill: #5c6070; }
```
